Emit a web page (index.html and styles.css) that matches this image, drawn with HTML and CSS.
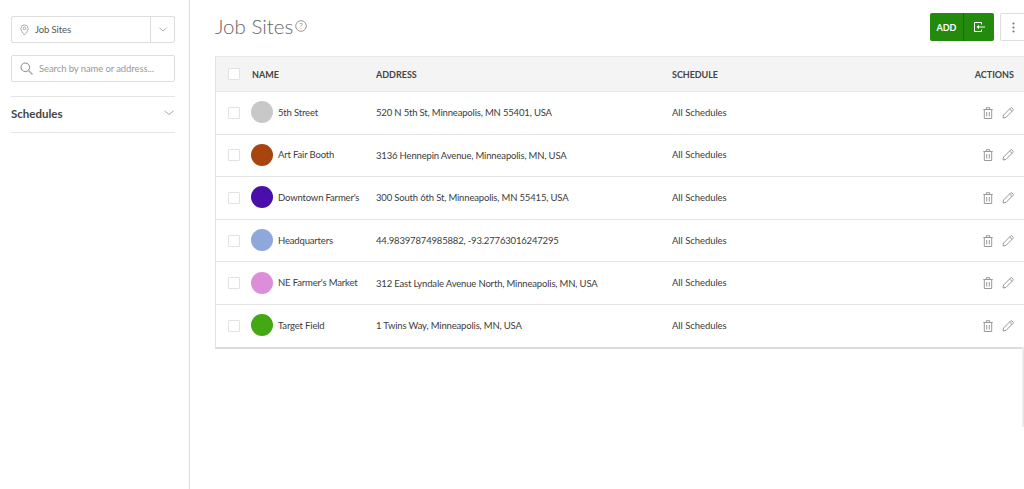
FILE: index.html
```html
<!DOCTYPE html>
<html lang="en">
<head>
<meta charset="utf-8">
<title>Job Sites</title>
<link rel="stylesheet" href="styles.css">
</head>
<body>
<div class="app">
  <aside class="sidebar">
    <div class="picker">
      <div class="picker-main">
        <svg class="pin" width="9" height="12" viewBox="0 0 10 13"><path d="M5 12C3 9.500 1 7.300 1 4.800a4 4 0 0 1 8 0C9 7.300 7 9.500 5 12z" fill="none" stroke="#999" stroke-width=".9"/><circle cx="5" cy="4.700" r="1.500" fill="none" stroke="#999" stroke-width=".9"/></svg>
        <span>Job Sites</span>
      </div>
      <div class="picker-caret"><svg width="8" height="5" viewBox="0 0 8 5"><path d="M.5.800 4 4 7.500.800" fill="none" stroke="#aaa"/></svg></div>
    </div>
    <div class="search">
      <svg width="13" height="13" viewBox="0 0 13 13"><circle cx="5.300" cy="5.300" r="4.300" fill="none" stroke="#888"/><path d="m8.500 8.500 4 4" stroke="#aaa" stroke-width="1.400"/></svg>
      <span>Search by name or address...</span>
    </div>
    <div class="filter">
      <span>Schedules</span>
      <svg width="10" height="6" viewBox="0 0 10 6"><path d="M.5.800 5 4.500 9.500.800" fill="none" stroke="#aaa"/></svg>
    </div>
  </aside>
  <main class="content">
    <header class="topbar">
      <div class="title">
        <h1>Job Sites</h1>
        <svg width="12" height="12" viewBox="0 0 12 12"><circle cx="6" cy="6" r="5.300" fill="none" stroke="#999"/><text x="6" y="8.700" class="qmark">?</text></svg>
      </div>
      <div class="actions">
        <div class="add">
          <span class="add-label">ADD</span>
          <span class="add-icon"><svg width="11" height="10" viewBox="0 0 11 10"><path d="M.5.500h7v2M7.500 7.500v2h-7v-9" fill="none" stroke="#fff"/><path d="M4 5h7" stroke="#fff"/><path d="M5 2.800 2.500 5 5 7.200z" fill="#fff"/></svg></span>
        </div>
        <div class="more"><svg width="3" height="11" viewBox="0 0 3 11"><circle cx="1.500" cy="1.500" r="1.100" fill="#777"/><circle cx="1.500" cy="5.500" r="1.100" fill="#777"/><circle cx="1.500" cy="9.500" r="1.100" fill="#777"/></svg></div>
      </div>
    </header>
    <section class="table">
      <div class="row head">
        <span class="box"></span>
        <span class="c-name">NAME</span>
        <span class="c-addr">ADDRESS</span>
        <span class="c-sched">SCHEDULE</span>
        <span class="c-act">ACTIONS</span>
      </div>
      <div class="row"><span class="box"></span><span class="c-name"><i class="dot dot-1"></i>5th Street</span><span class="c-addr">520 N 5th St, Minneapolis, MN 55401, USA</span><span class="c-sched">All Schedules</span><span class="c-act"><svg class="ic" width="10" height="12" viewBox="0 0 10 12"><use href="#trash"/></svg><svg class="ic" width="12" height="12" viewBox="0 0 12 12"><use href="#pen"/></svg></span></div>
      <div class="row"><span class="box"></span><span class="c-name"><i class="dot dot-2"></i>Art Fair Booth</span><span class="c-addr">3136 Hennepin Avenue, Minneapolis, MN, USA</span><span class="c-sched">All Schedules</span><span class="c-act"><svg class="ic" width="10" height="12" viewBox="0 0 10 12"><use href="#trash"/></svg><svg class="ic" width="12" height="12" viewBox="0 0 12 12"><use href="#pen"/></svg></span></div>
      <div class="row"><span class="box"></span><span class="c-name"><i class="dot dot-3"></i>Downtown Farmer's</span><span class="c-addr">300 South 6th St, Minneapolis, MN 55415, USA</span><span class="c-sched">All Schedules</span><span class="c-act"><svg class="ic" width="10" height="12" viewBox="0 0 10 12"><use href="#trash"/></svg><svg class="ic" width="12" height="12" viewBox="0 0 12 12"><use href="#pen"/></svg></span></div>
      <div class="row"><span class="box"></span><span class="c-name"><i class="dot dot-4"></i>Headquarters</span><span class="c-addr">44.98397874985882, -93.27763016247295</span><span class="c-sched">All Schedules</span><span class="c-act"><svg class="ic" width="10" height="12" viewBox="0 0 10 12"><use href="#trash"/></svg><svg class="ic" width="12" height="12" viewBox="0 0 12 12"><use href="#pen"/></svg></span></div>
      <div class="row"><span class="box"></span><span class="c-name"><i class="dot dot-5"></i>NE Farmer's Market</span><span class="c-addr">312 East Lyndale Avenue North, Minneapolis, MN, USA</span><span class="c-sched">All Schedules</span><span class="c-act"><svg class="ic" width="10" height="12" viewBox="0 0 10 12"><use href="#trash"/></svg><svg class="ic" width="12" height="12" viewBox="0 0 12 12"><use href="#pen"/></svg></span></div>
      <div class="row"><span class="box"></span><span class="c-name"><i class="dot dot-6"></i>Target Field</span><span class="c-addr">1 Twins Way, Minneapolis, MN, USA</span><span class="c-sched">All Schedules</span><span class="c-act"><svg class="ic" width="10" height="12" viewBox="0 0 10 12"><use href="#trash"/></svg><svg class="ic" width="12" height="12" viewBox="0 0 12 12"><use href="#pen"/></svg></span></div>
    </section>
  </main>
</div>
<div class="edge-shadow"></div>
<svg class="defs" width="0" height="0">
  <defs>
    <g id="trash" fill="none" stroke="#999" stroke-width="1"><path d="M.3 2.500h9.400M3.300 2.300V.7h3.400v1.600M1.300 2.500v9h7.400v-9"/><path d="M3.700 5v4.500M6.300 5v4.500"/></g>
    <g id="pen" fill="none" stroke="#999" stroke-width="1"><path d="M1 11l.6-3L8.600 1a1 1 0 0 1 1.400 0l1 1a1 1 0 0 1 0 1.400L4 10.400zM7.600 2l2.400 2.400"/></g>
  </defs>
</svg>
</body>
</html>
```
FILE: styles.css
```css
* { box-sizing: border-box; }
html, body { margin: 0; height: 100%; overflow: hidden; background: #fff; }
body { font-family: "Lato", "Noto Sans", sans-serif; color: #444; }
.app { display: flex; height: 489px; width: 1024px; }
.sidebar { width: 190px; flex: none; border-right: 1px solid #ddd; padding: 16px 14px 0 11px; }
.picker { display: flex; height: 27px; border: 1px solid #ddd; border-radius: 2px; }
.picker-main { flex: 1; display: flex; align-items: center; gap: 6px; padding-left: 8px; font-size: 9.500px; letter-spacing: -.1px; color: #555; }
.picker-caret { width: 24px; border-left: 1px solid #ddd; display: flex; align-items: center; justify-content: center; }
.search { display: flex; align-items: center; gap: 6px; height: 27px; margin-top: 12px; padding-left: 8px; border: 1px solid #ddd; border-radius: 2px; font-size: 9.500px; letter-spacing: -.1px; color: #999; }
.filter { display: flex; align-items: center; justify-content: space-between; height: 37px; margin-top: 14px; padding: 0 1px 2px 0; border-top: 1px solid #e5e5e5; border-bottom: 1px solid #e5e5e5; font-size: 11.500px; font-weight: 700; color: #444; }
.filter svg { margin-top: -2px; }
.content { flex: 1; min-width: 0; padding-left: 25px; }
.topbar { display: flex; justify-content: space-between; height: 56px; padding-top: 13px; }
.title { display: flex; align-items: center; gap: 2px; height: 26px; }
h1 { margin: 0; font-size: 20.500px; font-weight: 300; color: #666; }
.qmark { font-size: 8px; text-anchor: middle; fill: #999; }
.actions { display: flex; gap: 6px; margin-right: -2px; }
.add { display: flex; width: 64px; height: 28px; background: #238a0e; border-radius: 2px; color: #fff; font-size: 9px; font-weight: 700; }
.add-label { width: 34px; display: flex; align-items: center; justify-content: center; border-right: 1px solid #1a6a0a; }
.add-icon { flex: 1; display: flex; align-items: center; justify-content: center; }
.more { width: 26px; height: 28px; border: 1px solid #ddd; border-radius: 2px; display: flex; align-items: center; justify-content: center; }
.table { border-left: 1px solid #e2e2e2; border-top: 1px solid #e8e8e8; border-bottom: 2px solid #ddd; }
.row { display: flex; align-items: center; height: 42.600px; border-bottom: 1px solid #e5e5e5; font-size: 9.500px; letter-spacing: -.17px; color: #3c3c3c; }
.row:last-child { height: 42px; border-bottom: 0; }
.head { height: 35px; background: #f4f4f4; font-size: 9px; font-weight: 700; letter-spacing: 0; color: #444; }
.box { width: 12px; height: 12px; flex: none; margin-left: 12px; background: #fff; border: 1px solid #e2e2e2; border-radius: 1px; }
.c-name { width: 125px; flex: none; margin-left: 11px; display: flex; align-items: center; gap: 5px; margin-top: -1px; }
.head .c-name { padding-left: 1px; margin-top: 0; }
.c-addr { width: 296px; flex: none; }
.c-sched { width: 200px; flex: none; margin-top: -1px; letter-spacing: -.05px; }
.head .c-sched { margin-top: 0; }
.c-act { flex: 1; display: flex; align-items: center; justify-content: flex-end; gap: 9px; padding-right: 10px; }
.dot { width: 22px; height: 22px; border-radius: 50%; display: block; flex: none; }
.dot-1 { background: #c8c8c8; }
.dot-2 { background: #a8450f; }
.dot-3 { background: #4a0fa8; }
.dot-4 { background: #8fa8dc; }
.dot-5 { background: #dc8fd8; }
.dot-6 { background: #43a814; }
.defs { position: absolute; }
.edge-shadow { position: absolute; right: 0; top: 347px; width: 2px; height: 80px; background: linear-gradient(to right, #f4f4f4, #e2e2e2); }
```
